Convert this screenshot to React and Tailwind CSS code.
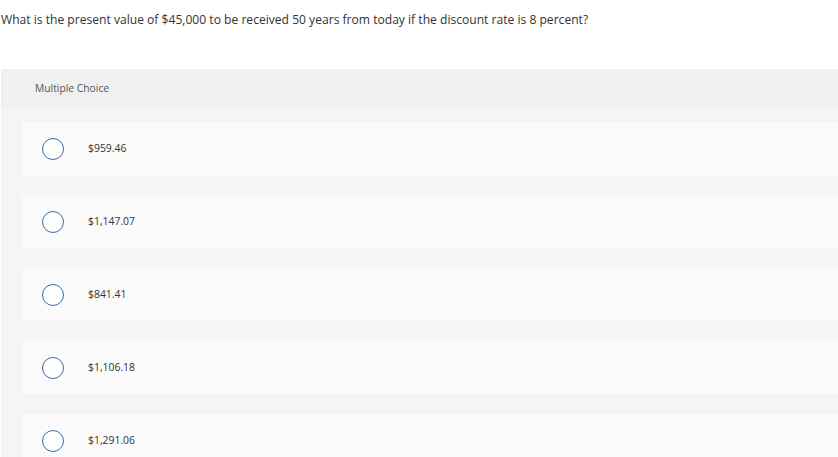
const options = ['$959.46', '$1,147.07', '$841.41', '$1,106.18', '$1,291.06']

export default function App() {
  return (
    <div
      className="w-[838px] h-[457px] overflow-hidden bg-white text-[#333]"
      style={{ fontFamily: '"Open Sans", "Liberation Sans", Arial, sans-serif' }}
    >
      <p className="pl-[1px] pt-[13px] text-[12.1px] leading-[14px]">
        What is the present value of $45,000 to be received 50 years from today if the discount rate is 8 percent?
      </p>

      <div className="mt-[42px] ml-[1px]">
        <div className="h-[40px] bg-[#f0f0f0] pl-[34px] flex items-center text-[10.3px] text-[#555]">
          Multiple Choice
        </div>
        <div className="bg-[#f5f5f5] pl-[21px] pt-[13px] pb-[20px] flex flex-col gap-[20px]">
          {options.map((o) => (
            <div key={o} className="h-[53px] bg-[#fafafa] flex items-center pl-[20px]">
              <span className="w-[22px] h-[22px] rounded-full border border-[#3a6ea5] bg-white shrink-0" />
              <span className="ml-[24px] text-[10.4px] text-[#333]">{o}</span>
            </div>
          ))}
        </div>
      </div>
    </div>
  )
}
